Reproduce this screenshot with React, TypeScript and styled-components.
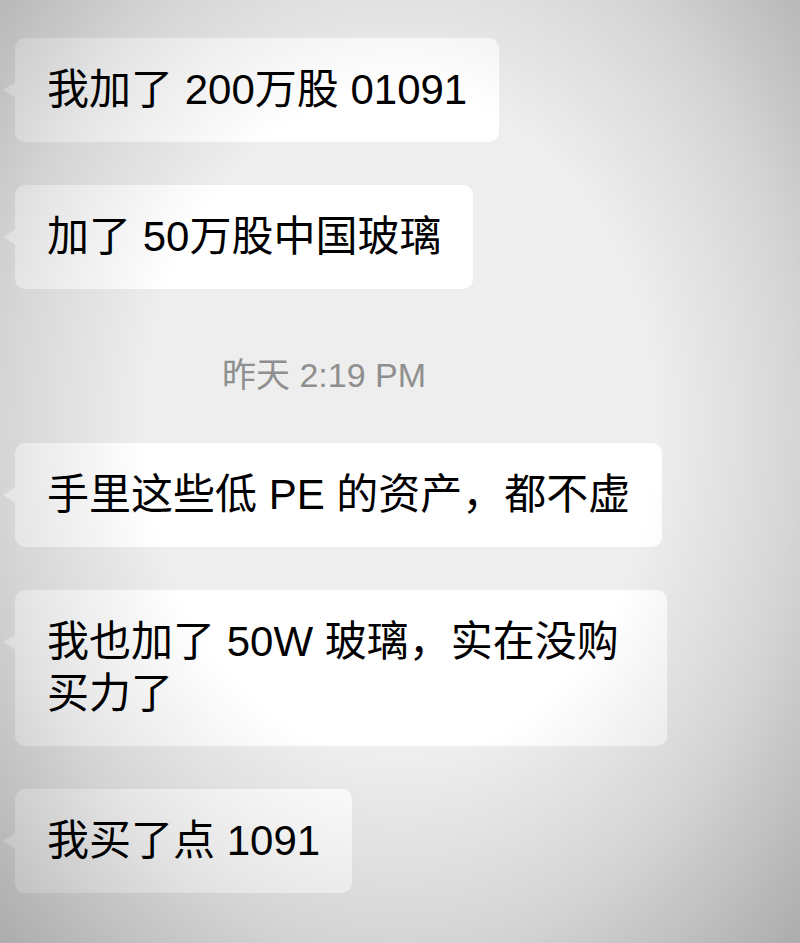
import React from 'react';
import styled, { createGlobalStyle } from 'styled-components';

const GlobalStyle = createGlobalStyle`
	html, body {
		margin: 0;
		padding: 0;
		background: #eeeeee;
	}
	body {
		font-family: 'Liberation Sans', 'Noto Sans CJK SC', sans-serif;
		-webkit-font-smoothing: antialiased;
	}
`;

const messagesBefore = ['我加了 200万股 01091', '加了 50万股中国玻璃'];
const messagesAfter = [
	'手里这些低 PE 的资产，都不虚',
	'我也加了 50W 玻璃，实在没购买力了',
	'我买了点 1091',
];

const Screen = styled.div`
	position: relative;
	min-height: 943px;
	overflow: hidden;
	background: #eeeeee;
`;

const Thread = styled.div`
	display: flex;
	flex-direction: column;
	align-items: flex-start;
	gap: 43px;
	padding: 38px 0 0 15px;
`;

const Bubble = styled.div`
	position: relative;
	box-sizing: border-box;
	max-width: 652px;
	padding: 26px 32px;
	background: #ffffff;
	border-radius: 10px;
	color: #000000;
	font-size: 42px;
	line-height: 52px;

	&::before {
		content: '';
		position: absolute;
		left: -12px;
		top: 44px;
		width: 13px;
		height: 16px;
		background: #ffffff;
		clip-path: polygon(100% 0, 0 50%, 100% 100%);
	}
`;

const Stamp = styled.div`
	box-sizing: border-box;
	width: 618px;
	height: 68px;
	padding-top: 22px;
	text-align: center;
	color: #8f8f8f;
	font-size: 34px;
	line-height: 42px;
`;

const Vignette = styled.div`
	position: absolute;
	inset: 0;
	pointer-events: none;
	background: radial-gradient(
		ellipse farthest-corner at 50% 45%,
		rgba(0, 0, 0, 0) 45%,
		rgba(0, 0, 0, 0.1) 70%,
		rgba(0, 0, 0, 0.28) 100%
	);
`;

export default function App() {
	return (
		<>
			<GlobalStyle />
			<Screen>
				<Thread>
					{messagesBefore.map((m) => (
						<Bubble key={m}>{m}</Bubble>
					))}
					<Stamp>昨天 2:19 PM</Stamp>
					{messagesAfter.map((m) => (
						<Bubble key={m}>{m}</Bubble>
					))}
				</Thread>
				<Vignette />
			</Screen>
		</>
	);
}
